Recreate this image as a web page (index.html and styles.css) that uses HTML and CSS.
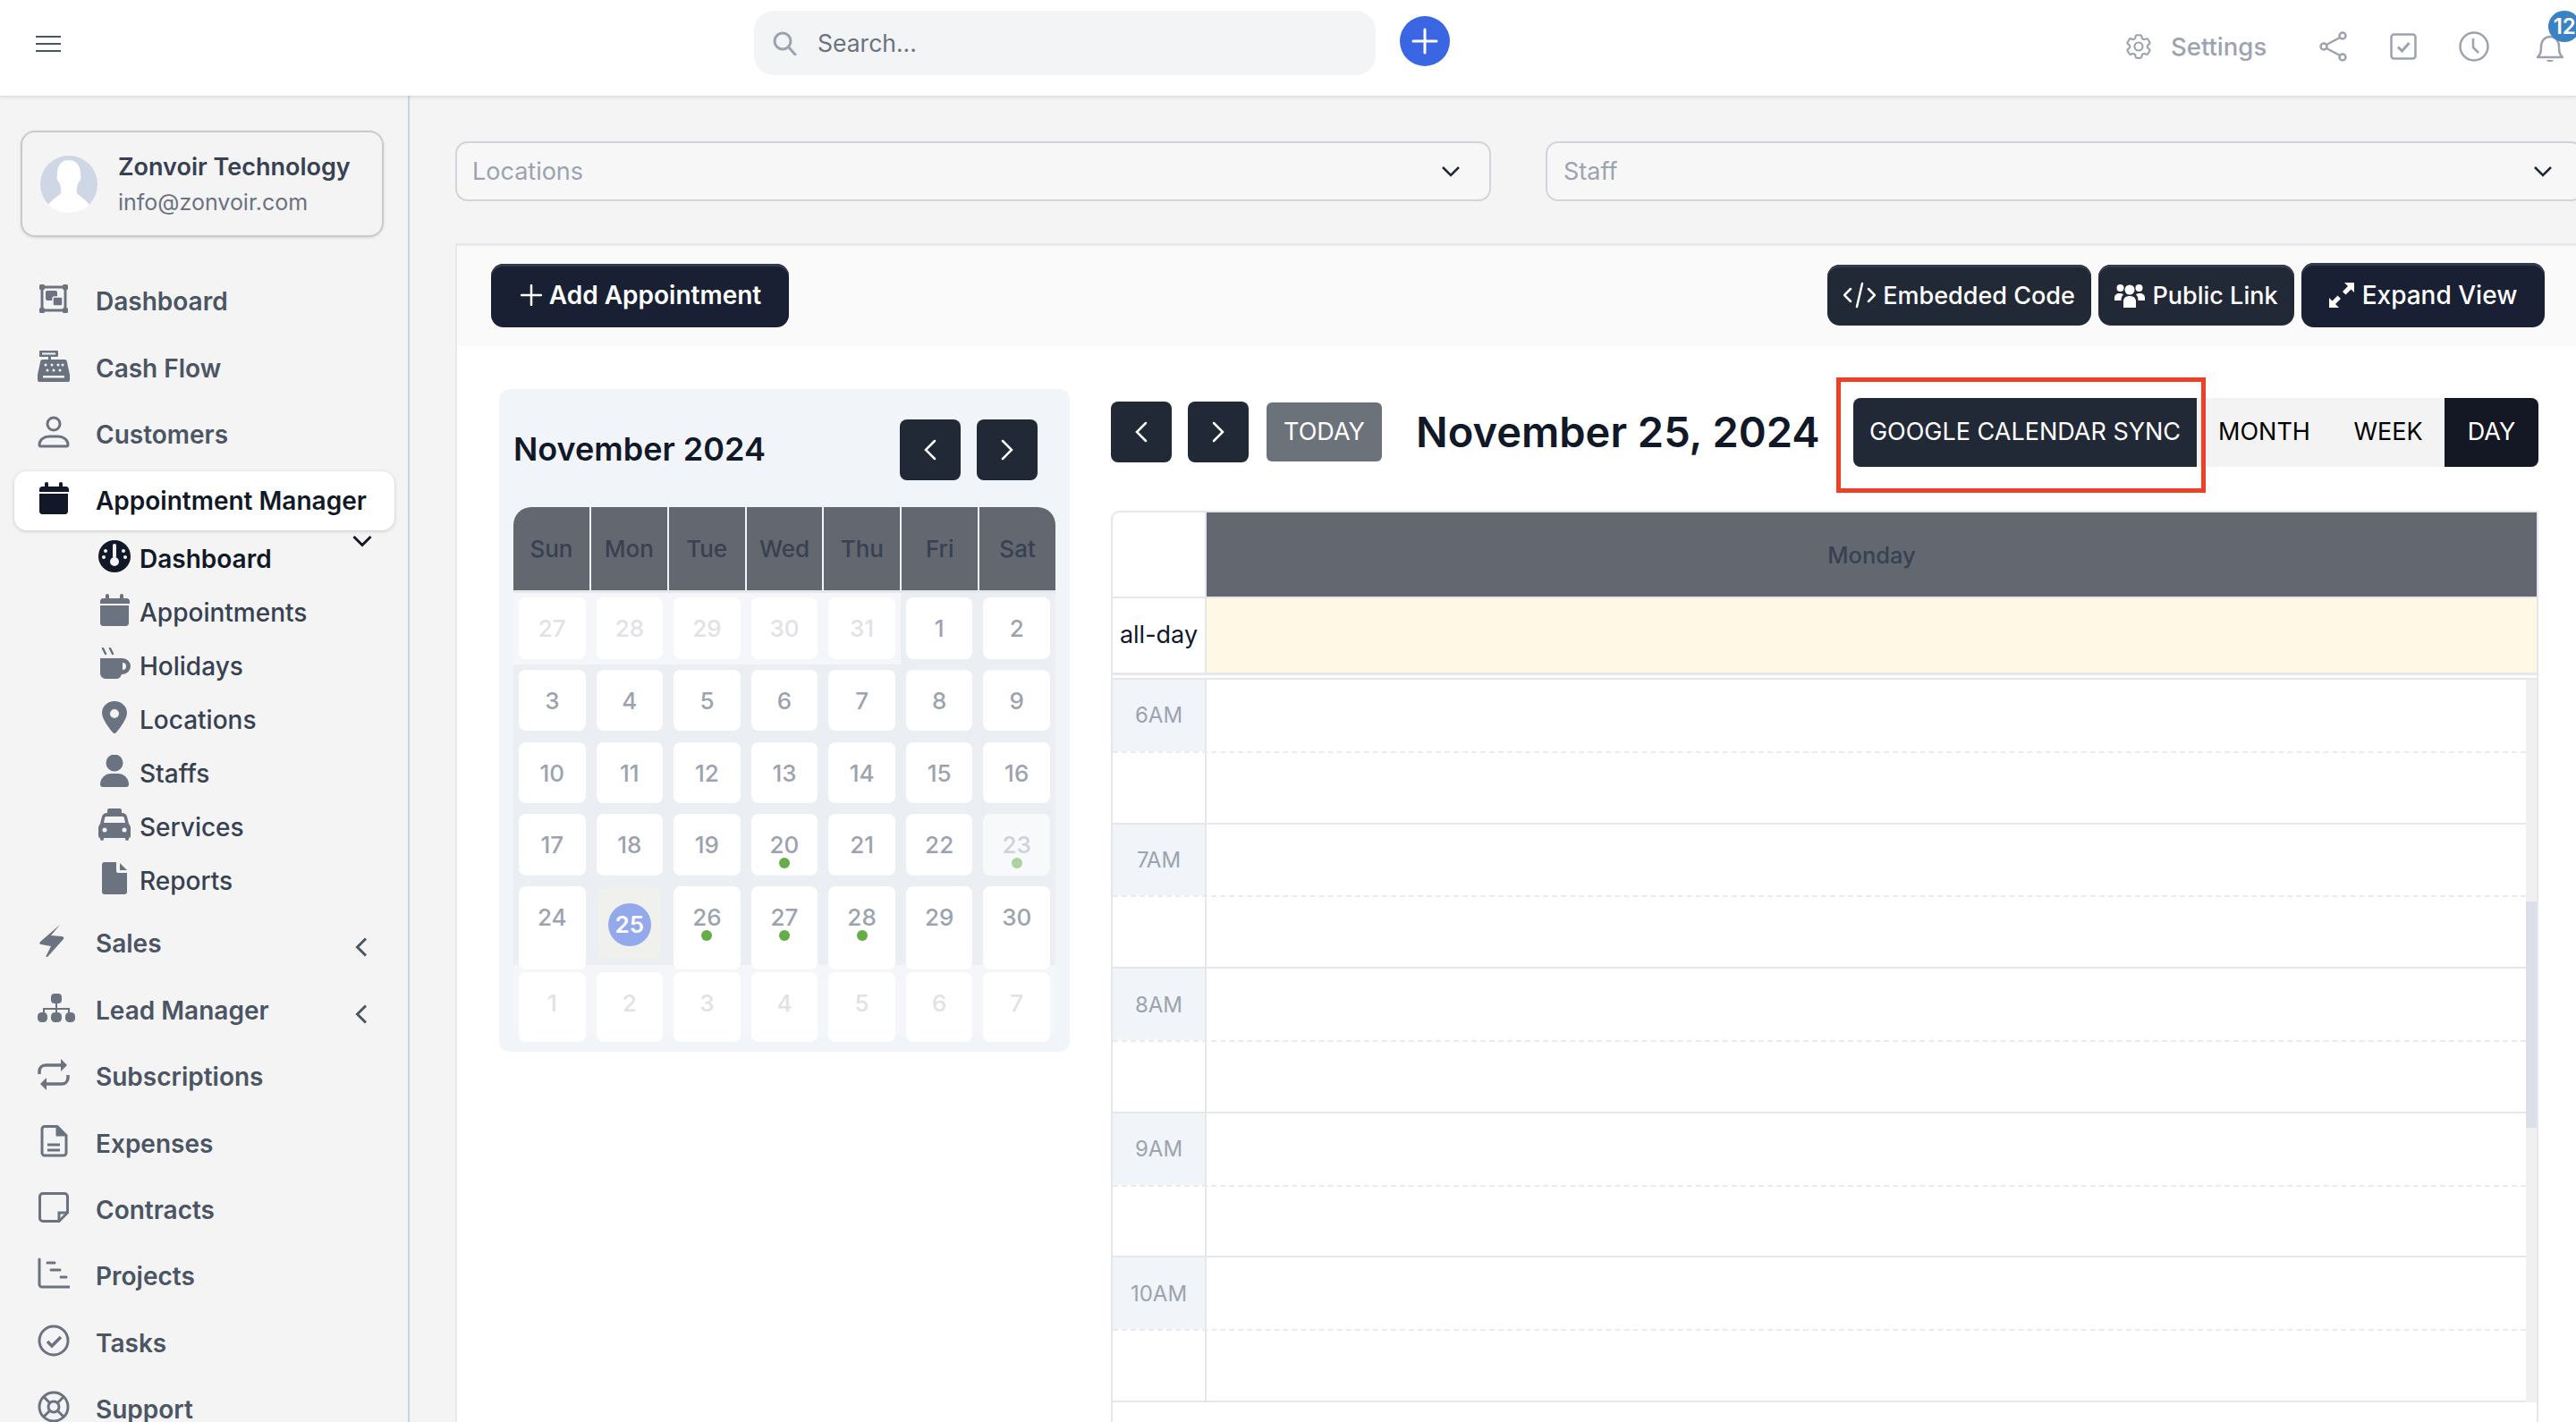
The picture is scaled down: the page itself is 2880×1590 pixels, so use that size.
FILE: index.html
```html
<!DOCTYPE html>
<html lang="en">
<head>
  <meta charset="UTF-8">
  <title>Appointment Manager</title>
  <link rel="stylesheet" href="styles.css">
</head>
<body>
  <header class="topbar">
    <button class="icon-btn menu-btn">
      <svg width="28" height="18" viewBox="0 0 28 18"><path d="M0 1h28M0 9h28M0 17h28" stroke="#4b5563" stroke-width="2"/></svg>
    </button>
    <div class="search">
      <svg width="28" height="28" viewBox="0 0 28 28" fill="none" stroke="#9ca3af" stroke-width="3"><circle cx="12" cy="12" r="9"/><path d="M19 19l7 8" stroke-linecap="round"/></svg>
      <span>Search...</span>
    </div>
    <button class="add-circle">
      <svg width="30" height="30" viewBox="0 0 30 30"><path d="M15 2v26M2 15h26" stroke="#fff" stroke-width="3" stroke-linecap="round"/></svg>
    </button>
    <div class="top-actions">
      <a class="settings">
        <svg width="34" height="34" viewBox="0 0 24 24" fill="none" stroke="#9ca3af" stroke-width="1.5" stroke-linejoin="round"><path d="M9.6 3.9c.1-.5.5-.9 1.1-.9h2.6c.6 0 1 .4 1.1.9l.2 1.3c.1.4.4.7.7.9l.4.2c.3.2.7.2 1.1.1l1.2-.5c.5-.2 1.1 0 1.4.5l1.3 2.2c.3.5.2 1.1-.3 1.4l-1 .8c-.3.2-.5.6-.5 1v.5c0 .4.2.8.5 1l1 .8c.5.3.6.9.3 1.4l-1.3 2.2c-.3.5-.9.7-1.4.5l-1.2-.5c-.4-.1-.8-.1-1.1.1l-.4.2c-.3.2-.6.5-.7.9l-.2 1.3c-.1.5-.5.9-1.1.9h-2.6c-.6 0-1-.4-1.1-.9l-.2-1.3c-.1-.4-.4-.7-.7-.9l-.4-.2c-.3-.2-.7-.2-1.1-.1l-1.2.5c-.5.2-1.1 0-1.4-.5l-1.3-2.2c-.3-.5-.2-1.1.3-1.4l1-.8c.3-.2.5-.6.5-1v-.5c0-.4-.2-.8-.5-1l-1-.8c-.5-.3-.6-.9-.3-1.4l1.3-2.2c.3-.5.9-.7 1.4-.5l1.2.5c.4.1.8.1 1.1-.1l.4-.2c.3-.2.6-.5.7-.9z"/><circle cx="12" cy="12" r="3.2"/></svg>
        <span>Settings</span>
      </a>
      <svg class="act share" width="32" height="34" viewBox="0 0 32 34" fill="none" stroke="#9ca3af" stroke-width="2.5"><circle cx="5" cy="17" r="3.5"/><circle cx="26" cy="5" r="3.5"/><circle cx="26" cy="29" r="3.5"/><path d="M8 15L23 7M8 19l15 8"/></svg>
      <svg class="act check" width="30" height="30" viewBox="0 0 30 30" fill="none" stroke="#9ca3af" stroke-width="2.5"><rect x="1.5" y="1.5" width="27" height="27" rx="3"/><path d="M9 15.5l4.5 4.5L21.5 11" stroke-width="3"/></svg>
      <svg class="act clock" width="34" height="34" viewBox="0 0 34 34" fill="none" stroke="#9ca3af" stroke-width="2.5"><circle cx="17" cy="17" r="15.5"/><path d="M16 8v10l6 6"/></svg>
      <div class="bell-wrap">
        <svg width="30" height="32" viewBox="0 0 30 32" fill="none" stroke="#9ca3af" stroke-width="2.5"><path d="M1 25c3-3 4-5 4-12C5 7 9 2 15 2s10 5 10 11c0 7 1 9 4 12z" stroke-linejoin="round"/><path d="M11 28c1 3 7 3 8 0z" fill="#9ca3af" stroke="none"/></svg>
        <span class="badge">12</span>
      </div>
    </div>
  </header>

  <div class="layout">
    <aside class="sidebar">
      <div class="profile">
        <svg class="avatar" width="64" height="64" viewBox="0 0 64 64"><circle cx="32" cy="32" r="32" fill="#cfd6e6"/><path d="M32 5c-9 0-13 7-13 15 0 3-1 4 0 7 1 2 2 2 3 5 1 4 2 7 1 10-2 3-9 6-14 13 6 6 15 9 23 9s17-3 23-9c-5-7-12-10-14-13-1-3 0-6 1-10 1-3 2-3 3-5 1-3 0-4 0-7 0-8-4-15-13-15z" fill="#fff"/></svg>
        <div class="profile-text">
          <div class="profile-name">Zonvoir Technology</div>
          <div class="profile-mail">info@zonvoir.com</div>
        </div>
      </div>

      <nav class="nav">
        <a class="nav-item">
          <svg class="nav-ico" width="36" height="36" viewBox="0 0 36 36" fill="#6b7280"><path d="M5 5h26v26H5z" fill="none" stroke="#6b7280" stroke-width="3"/><rect x="2" y="2" width="6" height="6" rx="1.5"/><rect x="28" y="2" width="6" height="6" rx="1.5"/><rect x="2" y="28" width="6" height="6" rx="1.5"/><rect x="28" y="28" width="6" height="6" rx="1.5"/><rect x="9" y="9" width="13" height="11" rx="2"/><rect x="17" y="16" width="11" height="10" rx="2" stroke="#f4f4f5" stroke-width="1.5"/></svg>
          Dashboard
        </a>
        <a class="nav-item">
          <svg class="nav-ico" width="36" height="36" viewBox="0 0 36 36" fill="#6b7280"><path d="M3 1h19a1 1 0 0 1 1 1v5a1 1 0 0 1-1 1h-7v3h15c2 0 3 1 3 3l3 14v6a2 2 0 0 1-2 2H2a2 2 0 0 1-2-2v-6l3-14c0-2 1-3 3-3h6V8H3a1 1 0 0 1-1-1V2a1 1 0 0 1 1-1z"/><g fill="#f4f4f5"><rect x="5" y="3.5" width="15" height="2"/><rect x="6" y="29" width="24" height="2.5"/><circle cx="9" cy="17" r="1.5"/><circle cx="16" cy="17" r="1.5"/><circle cx="23" cy="17" r="1.5"/><circle cx="28" cy="17" r="1.5"/><circle cx="11" cy="23" r="1.5"/><circle cx="18" cy="23" r="1.5"/><circle cx="25" cy="23" r="1.5"/></g></svg>
          Cash Flow
        </a>
        <a class="nav-item">
          <svg class="nav-ico" width="36" height="36" viewBox="0 0 36 36" fill="none" stroke="#6b7280" stroke-width="3"><circle cx="18" cy="9" r="7"/><path d="M4 34c-1.5 0-2-.8-2-2 0-5 5-9 11-9h10c6 0 11 4 11 9 0 1.2-.5 2-2 2z"/></svg>
          Customers
        </a>
        <a class="nav-item is-active">
          <svg class="nav-ico" width="36" height="36" viewBox="0 0 36 36" fill="#111827"><path d="M10 0c1.2 0 2 .8 2 2v3h12V2c0-1.2.8-2 2-2s2 .8 2 2v3h4c1.5 0 3 1.5 3 3v3H2V8c0-1.5 1.5-3 3-3h3V2c0-1.2.8-2 2-2zM2 13h32v20c0 1.5-1.5 3-3 3H5c-1.5 0-3-1.5-3-3z"/></svg>
          Appointment Manager
          <svg class="caret-down" width="22" height="14" viewBox="0 0 22 14" fill="none" stroke="#111827" stroke-width="3"><path d="M1.5 2L11 11.5 20.5 2"/></svg>
        </a>

        <div class="subnav">
          <a class="sub-item is-current">
            <svg class="sub-ico" width="36" height="36" viewBox="0 0 36 36"><circle cx="18" cy="18" r="18" fill="#111827"/><g fill="#f4f4f5"><rect x="16" y="4" width="4" height="16" rx="2"/><circle cx="18" cy="24" r="5"/><circle cx="8" cy="12" r="2"/><circle cx="28" cy="12" r="2"/><circle cx="6" cy="19" r="2"/><circle cx="30" cy="19" r="2"/></g></svg>
            Dashboard
          </a>
          <a class="sub-item">
            <svg class="sub-ico" width="36" height="36" viewBox="0 0 36 36" fill="#6b7280"><path d="M10 0c1.2 0 2 .8 2 2v3h12V2c0-1.2.8-2 2-2s2 .8 2 2v3h4c1.5 0 3 1.5 3 3v3H2V8c0-1.5 1.5-3 3-3h3V2c0-1.2.8-2 2-2zM2 13h32v20c0 1.5-1.5 3-3 3H5c-1.5 0-3-1.5-3-3z"/></svg>
            Appointments
          </a>
          <a class="sub-item">
            <svg class="sub-ico" width="36" height="36" viewBox="0 0 36 36" fill="#6b7280"><path d="M5 1l3 6M13 1l3 6" stroke="#6b7280" stroke-width="2.5" stroke-linecap="round"/><path d="M2 12h25a9 9 0 0 1 0 18h-1c-1 3-3 5-6 5H8c-3 0-6-3-6-6zM27 17v8a4 4 0 0 0 0-8z" fill-rule="evenodd"/></svg>
            Holidays
          </a>
          <a class="sub-item">
            <svg class="sub-ico" width="36" height="36" viewBox="0 0 36 36" fill="#6b7280"><path d="M18 0c8 0 14 6 14 13 0 7-8 17-12 22-1 1.3-3 1.3-4 0C12 30 4 20 4 13 4 6 10 0 18 0zm0 9a5 5 0 1 0 0 10 5 5 0 0 0 0-10z" fill-rule="evenodd"/></svg>
            Locations
          </a>
          <a class="sub-item">
            <svg class="sub-ico" width="36" height="36" viewBox="0 0 36 36" fill="#6b7280"><circle cx="18" cy="9" r="9.5"/><path d="M14 21h8c7 0 12 6 12 12 0 2-1 3-3 3H5c-2 0-3-1-3-3 0-6 5-12 12-12z"/></svg>
            Staffs
          </a>
          <a class="sub-item">
            <svg class="sub-ico" width="36" height="36" viewBox="0 0 36 36" fill="#6b7280"><path d="M12 0h12a2 2 0 0 1 2 2v3h1c2 0 4 1 5 4l2 8c1 1 2 3 2 5v9a2 2 0 0 1-2 2v1a2 2 0 0 1-4 0v-1H6v1a2 2 0 0 1-4 0v-1a2 2 0 0 1-2-2v-9c0-2 1-4 2-5l2-8c1-3 3-4 5-4h1V2a2 2 0 0 1 2-2zM9 9c-1 0-1.5.5-2 2l-1 5h24l-1-5c-.5-1.5-1-2-2-2z" fill-rule="evenodd"/><circle cx="7" cy="24" r="2.5" fill="#f4f4f5"/><circle cx="29" cy="24" r="2.5" fill="#f4f4f5"/></svg>
            Services
          </a>
          <a class="sub-item">
            <svg class="sub-ico" width="36" height="36" viewBox="0 0 36 36" fill="#6b7280"><path d="M7 0h13v10a2 2 0 0 0 2 2h10v21a3 3 0 0 1-3 3H7a3 3 0 0 1-3-3V3a3 3 0 0 1 3-3z"/><path d="M24 1l8 8h-8z"/></svg>
            Reports
          </a>
        </div>

        <a class="nav-item">
          <svg class="nav-ico" width="36" height="36" viewBox="0 0 36 36" fill="#6b7280"><path d="M25 0L15 12l12 1c2 0 3 2 2 3L11 36c-1 .5-2 0-1.5-1L15 24 4 22c-2-.5-2-2-1-3z"/></svg>
          Sales
          <svg class="caret-left" width="14" height="22" viewBox="0 0 14 22" fill="none" stroke="#4b5563" stroke-width="3"><path d="M12 1.5L2.5 11l9.5 9.5"/></svg>
        </a>
        <a class="nav-item">
          <svg class="nav-ico wide" width="42" height="36" viewBox="0 0 42 36" fill="#6b7280"><rect x="15" y="2" width="12" height="11" rx="4"/><path d="M20 12h2v6h14v6h-2v-4H22v4h-2v-4H8v4H6v-6h14z"/><rect x="0" y="23" width="11" height="11" rx="4.5"/><rect x="15" y="23" width="12" height="11" rx="4.5"/><rect x="31" y="23" width="11" height="11" rx="4.5"/></svg>
          Lead Manager
          <svg class="caret-left" width="14" height="22" viewBox="0 0 14 22" fill="none" stroke="#4b5563" stroke-width="3"><path d="M12 1.5L2.5 11l9.5 9.5"/></svg>
        </a>
        <a class="nav-item">
          <svg class="nav-ico" width="36" height="36" viewBox="0 0 36 36" fill="none" stroke="#6b7280" stroke-width="3.5"><path d="M2 18v-3c0-4 3-7 7-7h20"/><path d="M26 1l7 7-7 7z" fill="#6b7280" stroke="none"/><path d="M34 19v3c0 4-3 7-7 7H7"/><path d="M10 22l-7 7 7 7z" fill="#6b7280" stroke="none"/></svg>
          Subscriptions
        </a>
        <a class="nav-item">
          <svg class="nav-ico" width="36" height="36" viewBox="0 0 36 36" fill="none" stroke="#6b7280" stroke-width="3"><path d="M8 1.5h14l10 10V31a3 3 0 0 1-3 3H8a3 3 0 0 1-3-3V4.5a3 3 0 0 1 3-3z"/><path d="M22 2v9h9" fill="#6b7280"/><path d="M11 22h14M11 28h14"/></svg>
          Expenses
        </a>
        <a class="nav-item">
          <svg class="nav-ico" width="36" height="36" viewBox="0 0 36 36" fill="none" stroke="#6b7280" stroke-width="3"><path d="M24 33.5H6A3.5 3.5 0 0 1 2.5 30V6A3.5 3.5 0 0 1 6 2.5h24A3.5 3.5 0 0 1 33.5 6v18z"/><path d="M33 24H24v9"/></svg>
          Contracts
        </a>
        <a class="nav-item">
          <svg class="nav-ico" width="36" height="36" viewBox="0 0 36 36" fill="none" stroke="#6b7280" stroke-width="3"><path d="M2 2v28a3 3 0 0 0 3 3h31" stroke-linecap="round"/><path d="M11 6h8M15 14h10M26 22h6" stroke-linecap="round"/></svg>
          Projects
        </a>
        <a class="nav-item">
          <svg class="nav-ico" width="36" height="36" viewBox="0 0 36 36" fill="none" stroke="#6b7280" stroke-width="3"><circle cx="18" cy="18" r="16"/><path d="M11 19l5 5 10-10" stroke-width="3.5"/></svg>
          Tasks
        </a>
        <a class="nav-item">
          <svg class="nav-ico" width="36" height="36" viewBox="0 0 36 36" fill="none" stroke="#6b7280" stroke-width="3"><circle cx="18" cy="18" r="16"/><circle cx="18" cy="18" r="6"/><path d="M6 6l8 8M30 6l-8 8M6 30l8-8M30 30l-8-8"/></svg>
          Support
        </a>
      </nav>
    </aside>

    <main class="main">
      <div class="filters">
        <div class="select select-loc">Locations
          <svg width="20" height="12" viewBox="0 0 20 12" fill="none" stroke="#1f2937" stroke-width="2.5"><path d="M1 1l9 9 9-9"/></svg>
        </div>
        <div class="select select-staff">Staff
          <svg width="20" height="12" viewBox="0 0 20 12" fill="none" stroke="#1f2937" stroke-width="2.5"><path d="M1 1l9 9 9-9"/></svg>
        </div>
      </div>

      <section class="card">
        <div class="card-toolbar">
          <button class="btn btn-add">
            <svg width="24" height="24" viewBox="0 0 24 24"><path d="M12 1v22M1 12h22" stroke="#fff" stroke-width="2.5" stroke-linecap="round"/></svg>
            Add Appointment
          </button>
          <div class="toolbar-right">
            <button class="btn btn-embed">
              <svg width="36" height="30" viewBox="0 0 36 30" fill="none" stroke="#fff" stroke-width="2.5" stroke-linecap="round"><path d="M8 8l-7 7 7 7M28 8l7 7-7 7M21 2l-6 26"/></svg>
              Embedded Code
            </button>
            <button class="btn btn-public">
              <svg width="34" height="28" viewBox="0 0 34 28" fill="#fff"><circle cx="17" cy="8" r="5.5"/><circle cx="6.5" cy="6" r="4"/><circle cx="27.5" cy="6" r="4"/><path d="M10 28v-7c0-4 3-6 7-6s7 2 7 6v7zM0 20v-3c0-3 2-5 6-5 2 0 3 .5 4 1.5C8 15 7.500 17 7.500 20zM34 20v-3c0-3-2-5-6-5-2 0-3 .5-4 1.5 2 1.5 2.5 3.5 2.5 6.5z"/></svg>
              Public Link
            </button>
            <button class="btn btn-expand">
              <svg width="28" height="28" viewBox="0 0 28 28" fill="#fff"><path d="M17 0h11v11l-3.500-3.500-6 6-3.500-3.500 6-6zM11 28H0V17l3.500 3.500 6-6 3.500 3.500-6 6z"/></svg>
              Expand View
            </button>
          </div>
        </div>

        <div class="card-body">
          <div class="month-panel">
            <div class="month-head">
              <h2>November 2024</h2>
              <div class="nav-pair">
                <button class="square-btn"><svg width="14" height="24" viewBox="0 0 14 24" fill="none" stroke="#fff" stroke-width="2.5" stroke-linecap="round"><path d="M12 2L2 12l10 10"/></svg></button>
                <button class="square-btn"><svg width="14" height="24" viewBox="0 0 14 24" fill="none" stroke="#fff" stroke-width="2.5" stroke-linecap="round"><path d="M2 2l10 10L2 22"/></svg></button>
              </div>
            </div>
            <div class="dow">
              <div>Sun</div><div>Mon</div><div>Tue</div><div>Wed</div><div>Thu</div><div>Fri</div><div>Sat</div>
            </div>
            <div class="dates">
              <div class="date muted">27</div><div class="date muted">28</div><div class="date muted">29</div><div class="date muted">30</div><div class="date muted">31</div><div class="date">1</div><div class="date">2</div>
              <div class="date">3</div><div class="date">4</div><div class="date">5</div><div class="date">6</div><div class="date">7</div><div class="date">8</div><div class="date">9</div>
              <div class="date">10</div><div class="date">11</div><div class="date">12</div><div class="date">13</div><div class="date">14</div><div class="date">15</div><div class="date">16</div>
              <div class="date">17</div><div class="date">18</div><div class="date">19</div><div class="date has-dot">20</div><div class="date">21</div><div class="date">22</div><div class="date has-dot faded">23</div>
              <div class="date">24</div><div class="date today"><span>25</span></div><div class="date has-dot">26</div><div class="date has-dot">27</div><div class="date has-dot">28</div><div class="date">29</div><div class="date">30</div>
              <div class="date muted next">1</div><div class="date muted next">2</div><div class="date muted next">3</div><div class="date muted next">4</div><div class="date muted next">5</div><div class="date muted next">6</div><div class="date muted next">7</div>
            </div>
          </div>

          <div class="day-view">
            <div class="day-toolbar">
              <button class="square-btn"><svg width="14" height="24" viewBox="0 0 14 24" fill="none" stroke="#fff" stroke-width="2.5" stroke-linecap="round"><path d="M12 2L2 12l10 10"/></svg></button>
              <button class="square-btn"><svg width="14" height="24" viewBox="0 0 14 24" fill="none" stroke="#fff" stroke-width="2.5" stroke-linecap="round"><path d="M2 2l10 10L2 22"/></svg></button>
              <button class="today-btn">TODAY</button>
              <h1>November 25, 2024</h1>
              <div class="views">
                <button class="view view-sync">GOOGLE CALENDAR SYNC</button>
                <button class="view view-month">MONTH</button>
                <button class="view view-week">WEEK</button>
                <button class="view view-day">DAY</button>
              </div>
            </div>

            <div class="sched">
              <div class="sched-head">
                <div class="corner"></div>
                <div class="day-name">Monday</div>
              </div>
              <div class="sched-allday">
                <div class="allday-label">all-day</div>
                <div class="allday-cell"></div>
              </div>
              <div class="sched-body">
                <div class="hours">
                  <div class="hour"><div class="slot"><div class="time">6AM</div><div class="lane"></div></div><div class="slot half"><div class="time"></div><div class="lane"></div></div></div>
                  <div class="hour"><div class="slot"><div class="time">7AM</div><div class="lane"></div></div><div class="slot half"><div class="time"></div><div class="lane"></div></div></div>
                  <div class="hour"><div class="slot"><div class="time">8AM</div><div class="lane"></div></div><div class="slot half"><div class="time"></div><div class="lane"></div></div></div>
                  <div class="hour"><div class="slot"><div class="time">9AM</div><div class="lane"></div></div><div class="slot half"><div class="time"></div><div class="lane"></div></div></div>
                  <div class="hour"><div class="slot"><div class="time">10AM</div><div class="lane"></div></div><div class="slot half"><div class="time"></div><div class="lane"></div></div></div>
                </div>
                <div class="scrollbar"><div class="thumb"></div></div>
              </div>
            </div>
          </div>
        </div>
      </section>
    </main>
  </div>
</body>
</html>
```

FILE: styles.css
```css
* {
  box-sizing: border-box;
}
html, body {
  margin: 0;
  height: 100%;
}
body {
  width: 2880px;
  height: 1590px;
  overflow: hidden;
  font-family: Inter, "Liberation Sans", sans-serif;
  background: #f4f4f5;
  color: #111827;
}
button {
  font-family: inherit;
  border: none;
  cursor: pointer;
}

/* top bar */
.topbar {
  position: relative;
  z-index: 2;
  display: flex;
  align-items: flex-start;
  height: 107px;
  background: #fff;
  box-shadow: 0 1px 5px rgba(0, 0, 0, 0.14);
}
.icon-btn {
  background: none;
  padding: 0;
  display: flex;
}
.menu-btn {
  margin: 40px 0 0 40px;
}
.search {
  display: flex;
  align-items: center;
  gap: 23px;
  width: 695px;
  height: 72px;
  margin: 12px 0 0 775px;
  padding-left: 20px;
  background: #f3f4f6;
  border-radius: 22px;
  font-size: 26.5px;
  color: #6b7280;
}
.add-circle {
  display: flex;
  align-items: center;
  justify-content: center;
  width: 56px;
  height: 56px;
  margin: 18px 0 0 27px;
  padding: 0;
  border-radius: 50%;
  background: #3b66e3;
}
.top-actions {
  position: relative;
  display: flex;
  align-items: center;
  flex: 1;
  height: 107px;
  padding-left: 753px;
}
.settings {
  display: flex;
  align-items: center;
  gap: 19px;
  font-size: 27.5px;
  font-weight: 500;
  color: #9ca3af;
  margin-top: -3px;
}
.act {
  flex: none;
  margin-top: -3px;
}
.share {
  margin-left: 59px;
}
.check {
  margin-left: 47px;
}
.clock {
  margin-left: 47px;
}
.bell-wrap {
  position: relative;
  display: flex;
  margin: 2px 0 0 53px;
}
.badge {
  position: absolute;
  top: -27px;
  left: 13px;
  width: 36px;
  height: 35px;
  border-radius: 50%;
  background: #3b82c4;
  color: #fff;
  font-size: 24px;
  font-weight: 600;
  line-height: 35px;
  text-align: center;
}

/* page frame */
.layout {
  display: flex;
  height: 1483px;
}
.sidebar {
  flex: none;
  width: 458px;
  padding: 39px 0 0 16px;
  border-right: 2px solid #cbd5e1;
  overflow: hidden;
}
.profile {
  display: flex;
  align-items: center;
  gap: 23px;
  width: 406px;
  height: 119px;
  margin-left: 7px;
  padding-left: 20px;
  border: 2px solid #c9c9ce;
  border-radius: 16px;
  box-shadow: 0 1px 3px rgba(0, 0, 0, 0.12);
}
.avatar {
  flex: none;
}
.profile-name {
  font-size: 27px;
  font-weight: 600;
  color: #374151;
  line-height: 40px;
}
.profile-mail {
  font-size: 25px;
  color: #6b7280;
  line-height: 38px;
}

/* navigation */
.nav {
  margin-top: 35px;
  width: 425px;
}
.nav-item {
  position: relative;
  display: flex;
  align-items: center;
  height: 74.4px;
  padding-left: 26px;
  font-size: 28px;
  font-weight: 600;
  color: #4b5563;
  white-space: nowrap;
}
.nav-ico {
  flex: none;
  margin-right: 29px;
  margin-top: -6px;
}
.nav-ico.wide {
  margin-right: 23px;
}
.nav-item.is-active {
  height: 66px;
  margin-top: 4px;
  background: #fff;
  border-radius: 14px;
  box-shadow: 0 1px 4px rgba(0, 0, 0, 0.18);
  color: #111827;
}
.caret-down {
  position: absolute;
  top: 71px;
  right: 25px;
}
.caret-left {
  position: absolute;
  top: 30px;
  right: 30px;
}
.subnav {
  padding: 2px 0 3px 94px;
}
.sub-item {
  display: flex;
  align-items: center;
  height: 60px;
  font-size: 28px;
  font-weight: 500;
  color: #374151;
  white-space: nowrap;
}
.sub-ico {
  flex: none;
  margin-right: 10px;
  margin-top: -6px;
}
.sub-item.is-current {
  font-weight: 600;
  color: #111827;
}

/* main column */
.main {
  flex: 1;
  min-width: 0;
  padding: 51px 0 0 51px;
  overflow: hidden;
}
.filters {
  display: flex;
  gap: 61px;
  height: 67px;
}
.select {
  flex: none;
  display: flex;
  align-items: center;
  justify-content: space-between;
  height: 67px;
  padding: 0 33px 0 17px;
  background: #f7f7f8;
  border: 2px solid #d1d5db;
  border-radius: 14px;
  font-size: 27px;
  color: #9ca3af;
}
.select-loc {
  width: 1158px;
}
.select-staff {
  width: 1160px;
  padding-left: 18px;
}
.card {
  margin-top: 47px;
  height: 1400px;
  background: #fff;
  border-top: 3px solid #e9e9ed;
  border-left: 2px solid #e9e9ed;
}
.card-toolbar {
  display: flex;
  align-items: center;
  justify-content: space-between;
  height: 112px;
  padding: 0 35px 2px 38px;
  background: #fafafa;
}
.toolbar-right {
  display: flex;
  align-items: center;
  gap: 8px;
}
.btn {
  display: flex;
  align-items: center;
  justify-content: center;
  gap: 8px;
  height: 68px;
  padding: 0;
  background: #222936;
  color: #fff;
  border-radius: 14px;
  box-shadow: inset 0 3px 0 #343b49;
  font-size: 27px;
  font-weight: 500;
  white-space: nowrap;
}
.btn-add {
  height: 71px;
  width: 333px;
  padding-left: 2px;
  background: #1a2033;
  font-size: 28px;
  font-weight: 600;
}
.btn-embed {
  width: 295px;
}
.btn-public {
  width: 219px;
}
.btn-expand {
  width: 272px;
  height: 72px;
  background: #1a2033;
  font-size: 28px;
  gap: 9px;
}
.card-body {
  display: flex;
  padding: 48px 0 0 47px;
}

/* small month */
.month-panel {
  flex: none;
  width: 638px;
  height: 741px;
  padding: 34px 16px 0;
  background: #f1f4f9;
  border-radius: 12px;
}
.month-head {
  display: flex;
  align-items: center;
  justify-content: space-between;
  height: 68px;
  padding: 0 20px 0 0;
}
.month-head h2 {
  margin: 0 0 2px;
  font-size: 36px;
  font-weight: 600;
  color: #111827;
}
.nav-pair {
  display: flex;
  gap: 18px;
}
.square-btn {
  flex: none;
  display: flex;
  align-items: center;
  justify-content: center;
  width: 68px;
  height: 68px;
  padding: 0;
  background: #222936;
  border-radius: 8px;
}
.dow {
  display: grid;
  grid-template-columns: repeat(7, 1fr);
  gap: 2px;
  height: 93px;
  margin-top: 30px;
  border-radius: 20px 20px 0 0;
  overflow: hidden;
}
.dow div {
  display: flex;
  align-items: center;
  justify-content: center;
  background: #636770;
  font-size: 26px;
  font-weight: 500;
  color: #374151;
}
.dates {
  display: grid;
  grid-template-columns: repeat(7, 1fr);
  grid-template-rows: repeat(4, 68.5px) 93px 69px;
  column-gap: 12px;
  row-gap: 12.3px;
  height: 497px;
  padding: 5px 6px 0;
  border-top: 3px solid #e5e7eb;
  background:
    linear-gradient(#f5f6f9, #f5f6f9) 0 0 / 433px 80px no-repeat,
    linear-gradient(#f5f6f9, #f5f6f9) 0 100% / 100% 78px no-repeat,
    #ebeef3;
}
.date {
  position: relative;
  background: #fff;
  border-radius: 8px;
  font-size: 26px;
  font-weight: 500;
  color: #9ca3af;
  text-align: center;
  line-height: 70px;
}
.date.muted {
  color: #e0e2e7;
}
.date.next {
  margin-top: -9px;
}
.date.faded {
  background: #f8f9fb;
  color: #cdd1d9;
}
.date.has-dot::after {
  content: "";
  position: absolute;
  top: 49px;
  left: 50%;
  width: 12px;
  height: 12px;
  margin-left: -6px;
  border-radius: 50%;
  background: #65ad47;
}
.date.faded::after {
  background: #acd29d;
}
.date.today {
  display: flex;
  align-items: center;
  justify-content: center;
  margin: 2px 2px 12px;
  background: #f0f1ec;
  line-height: 1;
}
.date.today span {
  width: 48px;
  height: 48px;
  margin-top: 3px;
  border-radius: 50%;
  background: #93a9ec;
  color: #fff;
  font-weight: 600;
  line-height: 48px;
}

/* day view */
.day-view {
  flex: none;
  width: 1596px;
  margin-left: 46px;
}
.day-toolbar {
  display: flex;
  align-items: center;
  height: 96px;
}
.day-toolbar .square-btn + .square-btn {
  margin-left: 18px;
}
.today-btn {
  flex: none;
  width: 129px;
  height: 66px;
  margin-left: 20px;
  padding-bottom: 2px;
  background: #6c727a;
  color: #fff;
  border-radius: 6px;
  font-size: 27px;
}
.day-toolbar h1 {
  margin: 0 0 2px 38px;
  font-size: 47px;
  font-weight: 600;
  color: #111827;
  white-space: nowrap;
}
.views {
  flex: none;
  display: flex;
  margin-left: auto;
  height: 77px;
  background: #f3f3f3;
  border-radius: 8px;
}
.view {
  height: 77px;
  padding: 0 0 2px;
  background: none;
  color: #000;
  font-size: 27px;
}
.view-sync {
  position: relative;
  width: 384px;
  background: #222936;
  color: #fff;
  border-radius: 8px 0 0 8px;
}
.view-sync::after {
  content: "";
  position: absolute;
  top: -23px;
  left: -19px;
  right: -10px;
  bottom: -29px;
  border: 5px solid #ee4024;
}
.view-month {
  width: 151px;
}
.view-week {
  width: 126px;
}
.view-day {
  width: 105px;
  background: #141824;
  color: #fff;
  border-radius: 0 8px 8px 0;
}
.sched {
  margin-top: 40px;
  height: 1020px;
  border: 2px solid #e5e7eb;
  border-bottom: none;
  border-radius: 10px 0 0 0;
  overflow: hidden;
}
.sched-head {
  display: grid;
  grid-template-columns: 105px 1fr;
  height: 96px;
  border-bottom: 2px solid #e5e7eb;
}
.corner {
  border-right: 2px solid #e5e7eb;
}
.day-name {
  display: flex;
  align-items: center;
  justify-content: center;
  background: #636770;
  font-size: 25.5px;
  font-weight: 500;
  color: #374151;
}
.sched-allday {
  display: grid;
  grid-template-columns: 105px 1fr;
  height: 86px;
  border-bottom: 3px solid #e5e7eb;
}
.allday-label {
  display: flex;
  align-items: center;
  justify-content: center;
  border-right: 2px solid #e5e7eb;
  font-size: 27px;
  padding-bottom: 2px;
}
.allday-cell {
  background: #fff8e5;
}
.sched-body {
  display: flex;
  margin-top: 3px;
  border-top: 2px solid #e5e7eb;
}
.hours {
  flex: 1;
}
.hour {
  height: 161.6px;
  border-bottom: 2px solid #e5e7eb;
}
.slot {
  display: grid;
  grid-template-columns: 105px 1fr;
  height: 79.8px;
}
.slot.half {
  border-top: 2px dashed #ebebee;
}
.time {
  display: flex;
  align-items: center;
  justify-content: center;
  background: #f1f4f9;
  border-right: 2px solid #e5e7eb;
  font-size: 24px;
  color: #9ca3af;
}
.slot.half .time {
  background: #fff;
}
.scrollbar {
  flex: none;
  position: relative;
  width: 12px;
  background: #f0f0f0;
}
.thumb {
  position: absolute;
  top: 248px;
  left: 0;
  right: 0;
  height: 253px;
  background: #dcdfe8;
}
```
